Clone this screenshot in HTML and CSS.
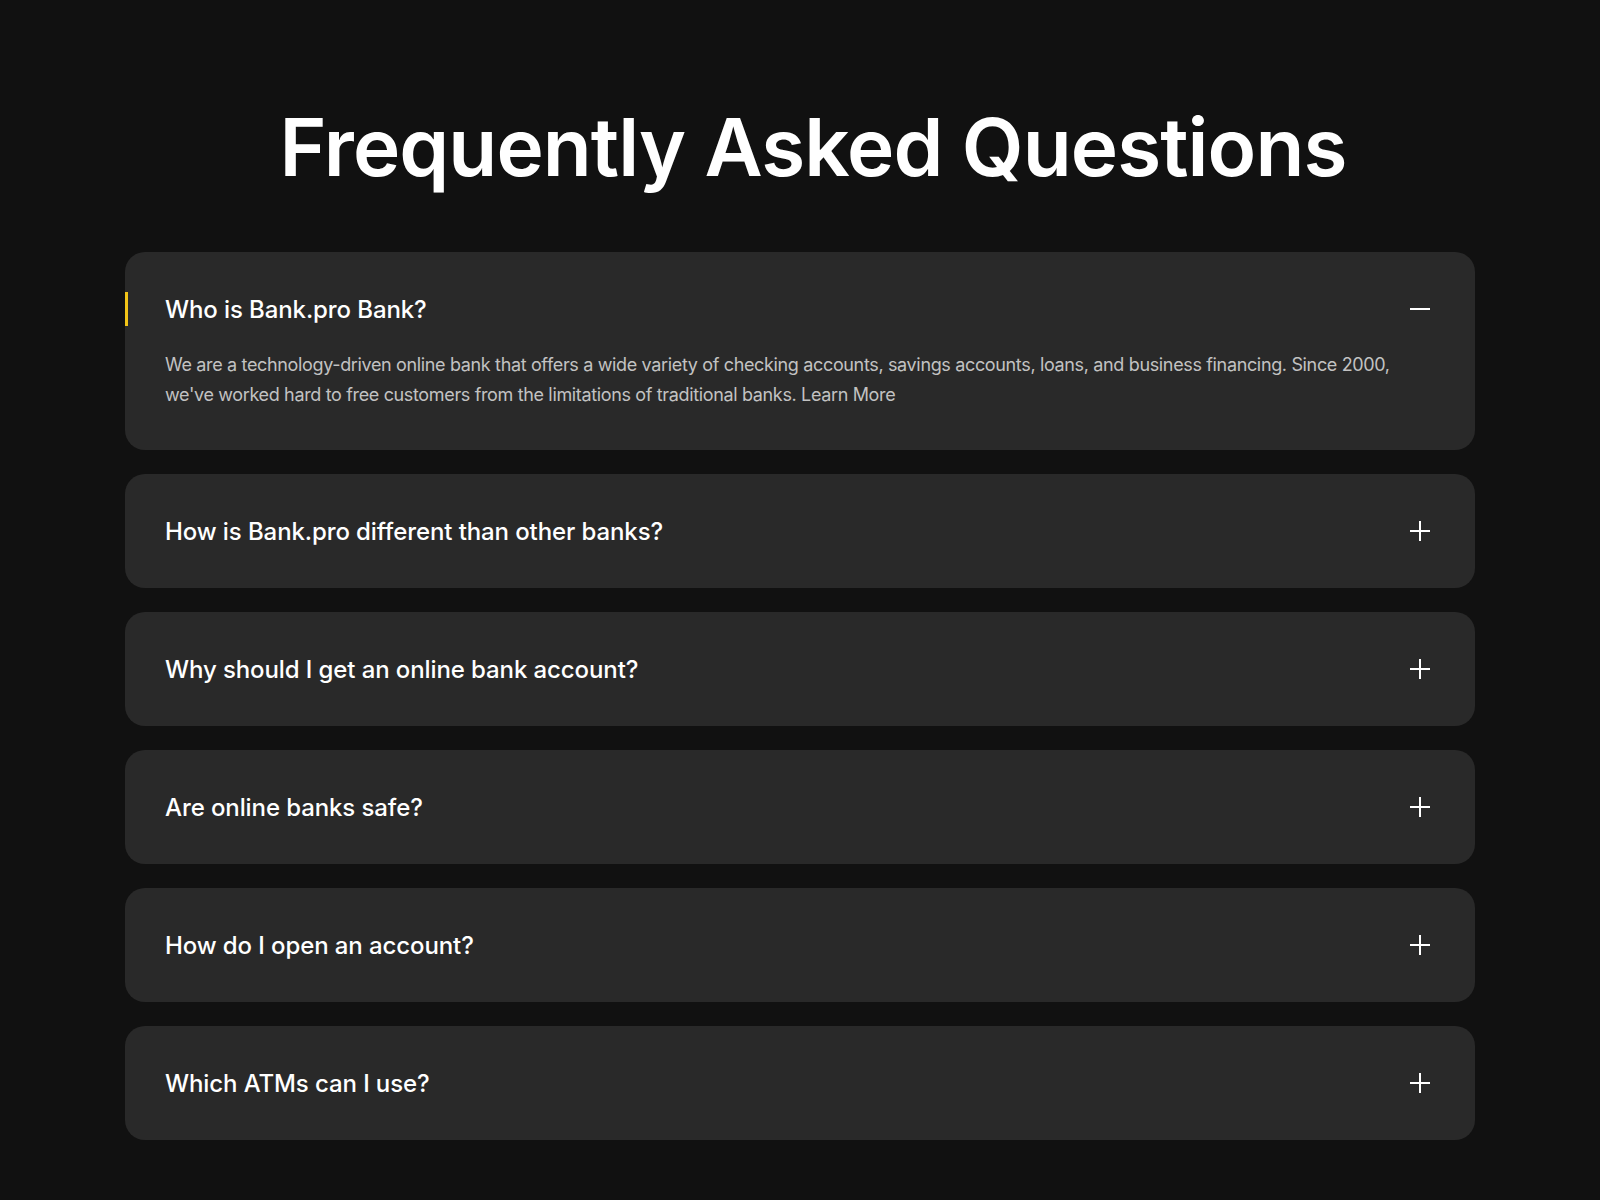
FILE: index.html
```html
<!DOCTYPE html>
<html lang="en">

<head>
    <meta charset="utf-8">
    <title>FAQ</title>
    <link rel="stylesheet" href="styles.css">
</head>

<body>
    <section class="faq">
        <h1 class="faq-title">Frequently Asked Questions</h1>
        <div class="faq-list">
            <div class="faq-item open">
                <div class="faq-question">
                    <span>Who is Bank.pro Bank?</span>
                    <svg class="faq-icon" viewBox="0 0 20 20"><path d="M0 10H20" /></svg>
                </div>
                <p class="faq-answer">We are a technology-driven online bank that offers a wide variety of checking accounts, savings accounts, loans, and business financing. Since 2000, we've worked hard to free customers from the limitations of traditional banks. Learn More</p>
            </div>
            <div class="faq-item">
                <div class="faq-question">
                    <span>How is Bank.pro different than other banks?</span>
                    <svg class="faq-icon" viewBox="0 0 20 20"><path d="M0 10H20M10 0V20" /></svg>
                </div>
            </div>
            <div class="faq-item">
                <div class="faq-question">
                    <span>Why should I get an online bank account?</span>
                    <svg class="faq-icon" viewBox="0 0 20 20"><path d="M0 10H20M10 0V20" /></svg>
                </div>
            </div>
            <div class="faq-item">
                <div class="faq-question">
                    <span>Are online banks safe?</span>
                    <svg class="faq-icon" viewBox="0 0 20 20"><path d="M0 10H20M10 0V20" /></svg>
                </div>
            </div>
            <div class="faq-item">
                <div class="faq-question">
                    <span>How do I open an account?</span>
                    <svg class="faq-icon" viewBox="0 0 20 20"><path d="M0 10H20M10 0V20" /></svg>
                </div>
            </div>
            <div class="faq-item">
                <div class="faq-question">
                    <span>Which ATMs can I use?</span>
                    <svg class="faq-icon" viewBox="0 0 20 20"><path d="M0 10H20M10 0V20" /></svg>
                </div>
            </div>
        </div>
    </section>
</body>

</html>
```

FILE: styles.css
```css
body {
    margin: 0;
    background-color: #111111;
    color: #ffffff;
    font-family: Inter, "Noto Sans", sans-serif;
}

.faq {
    max-width: 1350px;
    margin: 0 auto;
    padding: 99px 0 60px;
}

.faq-title {
    margin: 0 0 57px;
    padding-left: 26px;
    font-size: 80px;
    font-weight: 600;
    line-height: 96px;
    letter-spacing: -0.9px;
    text-align: center;
}

.faq-list {
    display: flex;
    flex-direction: column;
    gap: 24px;
}

.faq-item {
    background-color: #292929;
    border-radius: 20px;
    padding: 40px 45px 40px 0;
}

.faq-question {
    display: flex;
    align-items: center;
    justify-content: space-between;
    height: 34px;
    padding-left: 40px;
    font-size: 24px;
    font-weight: 500;
    letter-spacing: -0.1px;
}

.faq-item.open .faq-question {
    border-left: 3px solid #f2c417;
    padding-left: 37px;
}

.faq-icon {
    width: 20px;
    height: 20px;
    stroke: #ffffff;
    stroke-width: 2;
    fill: none;
}

.faq-answer {
    margin: 24px 0 0;
    padding-left: 40px;
    padding-right: 10px;
    font-size: 18px;
    line-height: 30px;
    color: #c2c2c2;
    letter-spacing: -0.35px;
}
```
